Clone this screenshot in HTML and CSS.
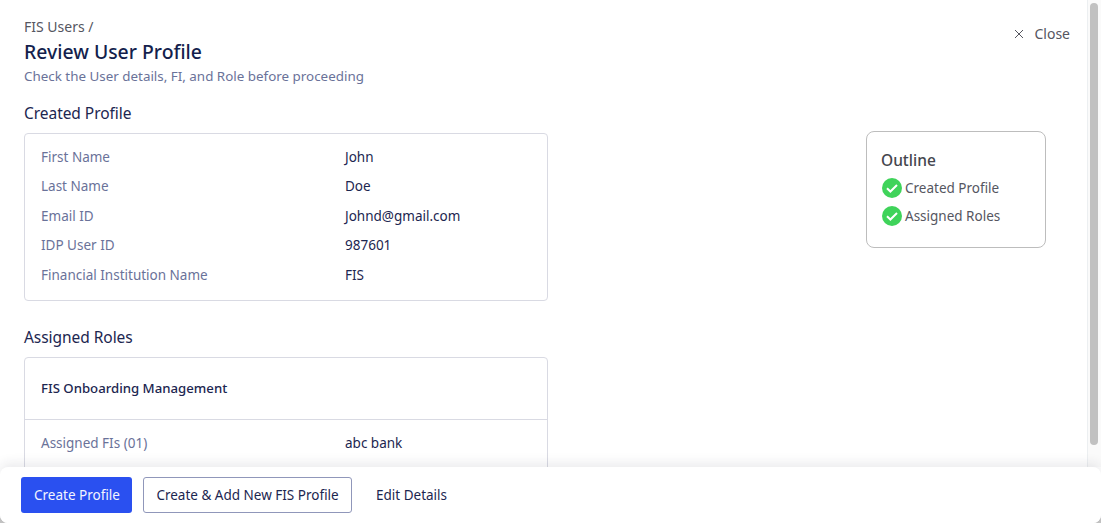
FILE: index.html
```html
<!DOCTYPE html>
<html lang="en">
<head>
<meta charset="utf-8">
<title>Review User Profile</title>
<link rel="stylesheet" href="styles.css">
</head>
<body>
<div class="modal">
  <div class="main">
    <div class="content">
      <div class="header">
        <div class="heading">
          <div class="crumb">FIS Users /</div>
          <h1 class="title">Review User Profile</h1>
          <p class="sub">Check the User details, FI, and Role before proceeding</p>
        </div>
        <button class="close" type="button">
          <svg class="close-icon" viewBox="0 0 10 10" width="10" height="10"><path d="M1 1l8 8M9 1l-8 8" stroke="#55565f" stroke-width="1" fill="none"/></svg>
          <span>Close</span>
        </button>
      </div>
      <div class="columns">
        <div class="left">
          <h2 class="section first">Created Profile</h2>
          <div class="card">
            <dl class="rows">
              <div class="row"><dt>First Name</dt><dd>John</dd></div>
              <div class="row"><dt>Last Name</dt><dd>Doe</dd></div>
              <div class="row"><dt>Email ID</dt><dd>Johnd@gmail.com</dd></div>
              <div class="row"><dt>IDP User ID</dt><dd>987601</dd></div>
              <div class="row"><dt>Financial Institution Name</dt><dd>FIS</dd></div>
            </dl>
          </div>
          <h2 class="section">Assigned Roles</h2>
          <div class="card">
            <div class="role">FIS Onboarding Management</div>
            <dl class="rows assigned">
              <div class="row"><dt>Assigned FIs (01)</dt><dd>abc bank</dd></div>
            </dl>
          </div>
        </div>
        <aside class="outline">
          <h3 class="outline-title">Outline</h3>
          <div class="outline-item">
            <svg class="check" viewBox="0 0 20 20" width="20" height="20"><circle cx="10" cy="10" r="10" fill="#3fd35a"/><path d="M5 10.3l3.4 3.2L15 7" stroke="#fff" stroke-width="2" fill="none"/></svg>
            <span>Created Profile</span>
          </div>
          <div class="outline-item">
            <svg class="check" viewBox="0 0 20 20" width="20" height="20"><circle cx="10" cy="10" r="10" fill="#3fd35a"/><path d="M5 10.3l3.4 3.2L15 7" stroke="#fff" stroke-width="2" fill="none"/></svg>
            <span>Assigned Roles</span>
          </div>
        </aside>
      </div>
    </div>
    <div class="track"><div class="thumb"></div></div>
  </div>
  <footer class="footer">
    <button class="btn primary" type="button">Create Profile</button>
    <button class="btn secondary" type="button">Create &amp; Add New FIS Profile</button>
    <button class="btn text" type="button">Edit Details</button>
  </footer>
</div>
</body>
</html>
```
FILE: styles.css
```css
* { box-sizing: border-box; }
html, body { margin: 0; height: 100%; background: #c4c4c4; overflow: hidden; }
body { font-family: "Noto Sans", "Open Sans", sans-serif; font-size: 14px; color: #1c2650; }
.modal { height: 523px; display: flex; flex-direction: column; background: #fff; border-radius: 0 0 8px 8px; }
.main { flex: 1; min-height: 0; display: flex; }
.content { flex: 1; min-width: 0; overflow: hidden; padding: 18px 17px 0 24px; }
.header { display: flex; justify-content: space-between; align-items: flex-start; }
.crumb { font-size: 14px; line-height: 18px; color: #55565f; }
.title { margin: 3px 0 0; font-size: 19.4px; line-height: 26px; font-weight: 500; color: #141f4d; }
.sub { margin: 2px 0 0; font-size: 13.4px; line-height: 18px; color: #6a7299; }
.close { display: flex; align-items: center; gap: 10px; margin-top: 7px; padding: 0; border: 0; background: none; font: inherit; font-size: 14px; line-height: 18px; color: #55565f; }
.columns { display: flex; justify-content: space-between; padding-right: 24px; }
.left { width: 524px; }
.section { margin: 25px 0 9px; font-size: 15.5px; letter-spacing: -0.05px; line-height: 22px; font-weight: 400; color: #1c2650; }
.section.first { margin-top: 17px; }
.card { border: 1px solid #d9dae3; border-radius: 4px; background: #fff; }
.rows { margin: 0; padding: 8px 16px 10px; display: flex; flex-direction: column; }
.row { display: flex; height: 29.5px; align-items: center; }
.row dt { width: 304px; color: #6a7299; font-size: 13.5px; }
.row dd { margin: 0; color: #1c2650; font-size: 13.5px; }
.role { height: 62px; padding: 0 16px; display: flex; align-items: center; font-size: 13.2px; font-weight: 500; border-bottom: 1px solid #d9dae3; }
.rows.assigned { padding-top: 9px; padding-bottom: 30px; }
.outline { width: 180px; height: 117px; margin-top: 46px; padding: 17px 14px 0; border: 1px solid #bdbdbd; border-radius: 8px; color: #55565f; }
.outline-title { margin: 0 0 3px; font-size: 15.5px; line-height: 22px; font-weight: 500; color: #44454d; }
.outline-item { display: flex; align-items: center; gap: 3px; height: 28px; padding-left: 1px; font-size: 13.5px; }
.check { flex: none; }
.track { width: 14px; flex: none; border-left: 1px solid #eceff1; padding: 3px 3px 0 2px; background: #fafafa; }
.thumb { height: 442px; border-radius: 5px; background: #c1c1c1; }
.footer { height: 56px; flex: none; display: flex; align-items: center; padding: 0 0 0 21px; background: #fff; border-radius: 8px; box-shadow: 0 -4px 12px rgba(30, 30, 60, 0.09); position: relative; }
.btn { height: 36px; border-radius: 3px; font: inherit; font-size: 13.5px; color: #1c2650; padding: 0 12px; background: #fff; border: 1px solid transparent; white-space: nowrap; }
.primary { width: 111px; background: #2a50f0; color: #f2f4ff; }
.secondary { width: 209px; margin-left: 11px; border-color: #9097ba; }
.text { margin-left: 11px; }
```
